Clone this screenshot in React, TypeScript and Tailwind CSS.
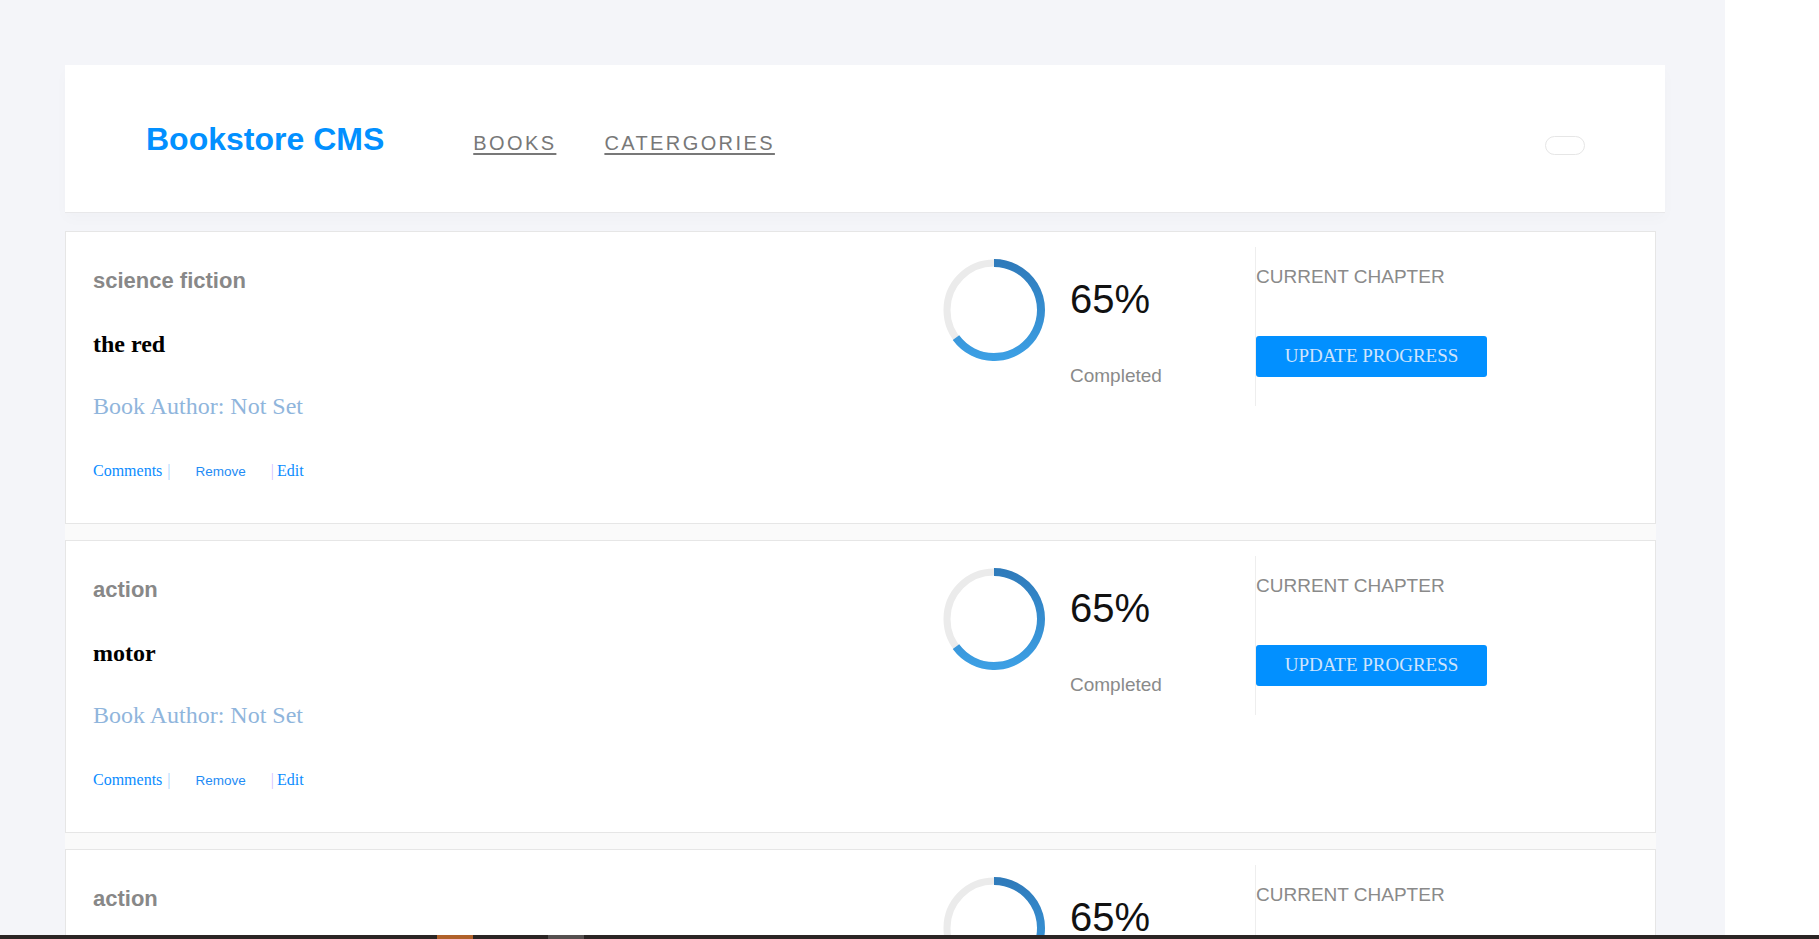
import React from 'react';

interface Book {
  id: string;
  category: string;
  title: string;
  author: string;
  progress: number;
}

const books: Book[] = [
  { id: '1', category: 'science fiction', title: 'the red', author: 'Not Set', progress: 65 },
  { id: '2', category: 'action', title: 'motor', author: 'Not Set', progress: 65 },
  { id: '3', category: 'action', title: 'motor', author: 'Not Set', progress: 65 },
];

const sans = "font-['Liberation_Sans',Arial,sans-serif]";
const serif = "font-['Liberation_Serif','Times_New_Roman',serif]";

const ProgressRing: React.FC<{ value: number; id: string }> = ({ value, id }) => {
  const r = 47;
  const angle = (value / 100) * 2 * Math.PI;
  const endX = 51 + r * Math.sin(angle);
  const endY = 51 - r * Math.cos(angle);
  const large = value > 50 ? 1 : 0;
  return (
    <svg width="102" height="102" viewBox="0 0 102 102" className="shrink-0">
      <defs>
        <linearGradient id={`ring-${id}`} x1="0" y1="0" x2="0" y2="1">
          <stop offset="0%" stopColor="#2f7bbb" />
          <stop offset="100%" stopColor="#3c9fe4" />
        </linearGradient>
      </defs>
      <circle cx="51" cy="51" r={r} fill="none" stroke="#ebebeb" strokeWidth="7" />
      <path
        d={`M 51 ${51 - r} A ${r} ${r} 0 ${large} 1 ${endX} ${endY}`}
        fill="none"
        stroke={`url(#ring-${id})`}
        strokeWidth="8"
      />
    </svg>
  );
};

const BookCard: React.FC<{ book: Book }> = ({ book }) => (
  <div className="flex h-[293px] w-full shrink-0 border border-[#e6e6e6] bg-white">
    <div className="flex w-[877px] shrink-0 flex-col pl-[27px] pt-[38px]">
      <h4 className={`${sans} text-[22px] font-bold leading-none text-[#888888]`}>{book.category}</h4>
      <h2 className={`${serif} mt-[40px] text-[24px] font-bold leading-none text-black`}>{book.title}</h2>
      <p className={`${serif} mt-[38px] text-[24px] leading-none text-[#8fb5dc]`}>
        Book Author: {book.author}
      </p>
      <div className="mt-[45px] flex items-baseline">
        <span className={`${serif} text-[16px] leading-none text-[#0a8cff]`}>Comments</span>
        <span className={`${serif} ml-[5px] text-[16px] leading-none text-[#a9d4ff]`}>|</span>
        <button className={`${sans} ml-[25px] text-[13.5px] leading-none text-[#1f8cf5]`}>Remove</button>
        <span className={`${serif} ml-[25px] text-[16px] leading-none text-[#d5c0ff]`}>|</span>
        <span className={`${serif} ml-[3px] text-[16px] leading-none text-[#0a8cff]`}>Edit</span>
      </div>
    </div>
    <div className="flex w-[312px] shrink-0 items-start pt-[27px]">
      <ProgressRing value={book.progress} id={book.id} />
      <div className="ml-[25px] mt-[20px] flex flex-col">
        <span className={`${sans} text-[40px] leading-none text-[#111111]`}>{book.progress}%</span>
        <span className={`${sans} mt-[47px] text-[19px] leading-none text-[#8a8a8a]`}>Completed</span>
      </div>
    </div>
    <div className="mt-[15px] flex h-[159px] flex-col border-l border-[#eeeeee] pt-[20px]">
      <span className={`${sans} text-[19px] leading-none text-[#8a8a8a]`}>CURRENT CHAPTER</span>
      <button
        className={`${serif} mt-[50px] flex h-[41px] w-[231px] items-center justify-center rounded-[3px] bg-[#0290ff] text-[19px] text-[#cfe4fc]`}
      >
        UPDATE PROGRESS
      </button>
    </div>
  </div>
);

export default function App() {
  return (
    <div className="flex h-[939px] w-full flex-col overflow-hidden bg-white">
      <div className="flex min-h-0 flex-1 overflow-hidden">
        <div className="w-[1725px] shrink-0 bg-[#f4f5f9] pl-[65px] pt-[65px]">
          <header className="flex h-[148px] w-[1600px] items-center border-b border-[#e8e8ea] bg-white pl-[81px] pr-[80px] shadow-[0_6px_14px_rgba(0,0,0,0.02)]">
            <h1 className={`${sans} text-[32px] font-bold leading-none text-[#0290ff]`}>Bookstore CMS</h1>
            <nav className="ml-[89px] mt-[8px] flex items-center gap-[48px]">
              <a
                href="#books"
                className={`${sans} text-[20px] leading-none tracking-[2.4px] text-[#787878] underline decoration-2 underline-offset-[3px]`}
              >
                BOOKS
              </a>
              <a
                href="#categories"
                className={`${sans} text-[20px] leading-none tracking-[2.4px] text-[#787878] underline decoration-2 underline-offset-[3px]`}
              >
                CATERGORIES
              </a>
            </nav>
            <div className="ml-auto mt-[14px] h-[19px] w-[40px] rounded-full border border-[#e6e6e6]" />
          </header>
          <main className="mt-[18px] flex w-[1591px] flex-col gap-[16px] bg-[#fafafa]">
            {books.map((b) => (
              <BookCard key={b.id} book={b} />
            ))}
          </main>
        </div>
      </div>
      <div className="flex h-[4px] w-full shrink-0 bg-[#2b2524]">
        <div className="ml-[437px] w-[36px] bg-[#b0612a]" />
        <div className="ml-[75px] w-[36px] bg-[#55504f]" />
      </div>
    </div>
  );
}
